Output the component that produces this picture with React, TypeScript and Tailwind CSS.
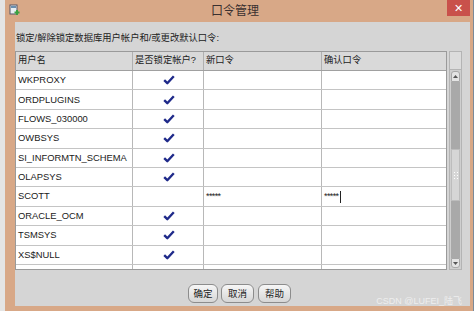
import React from "react";

const rows: { name: string; lock: boolean; pw?: boolean }[] = [
  { name: "WKPROXY", lock: true },
  { name: "ORDPLUGINS", lock: true },
  { name: "FLOWS_030000", lock: true },
  { name: "OWBSYS", lock: true },
  { name: "SI_INFORMTN_SCHEMA", lock: true },
  { name: "OLAPSYS", lock: true },
  { name: "SCOTT", lock: false, pw: true },
  { name: "ORACLE_OCM", lock: true },
  { name: "TSMSYS", lock: true },
  { name: "XS$NULL", lock: true },
  { name: "", lock: false },
];

function Check() {
  return (
    <svg width="12" height="10" viewBox="0 0 12 10">
      <path d="M1.2 5.2 L4.3 8.2 L10.8 1.2" fill="none" stroke="#1f2a8a" strokeWidth="2.4" strokeLinejoin="round" />
    </svg>
  );
}

function AppIcon() {
  return (
    <svg width="12" height="12" viewBox="0 0 12 12">
      <rect x="1" y="1" width="7" height="9" fill="#e8eef2" stroke="#556" strokeWidth="1" />
      <rect x="2" y="2" width="5" height="2" fill="#6a8fb0" />
      <path d="M8 6 V11 M5.5 8.5 H10.5" stroke="#3aa040" strokeWidth="2" />
    </svg>
  );
}

export default function App() {
  const font = { fontFamily: '"Liberation Sans", "Noto Sans CJK SC", sans-serif' };
  return (
    <div className="w-[474px] h-[311px] flex bg-[#e4e4e4] overflow-hidden" style={font}>
      <div className="w-[5px] shrink-0" />
      <div className="flex flex-col w-[468px] bg-[#d8a887]">
        {/* title bar */}
        <div className="h-[22px] flex items-start relative shrink-0">
          <div className="ml-[4px] mt-[4px]">
            <AppIcon />
          </div>
          <div className="flex-1 text-center text-[12px] leading-[22px] text-[#3a3030] pl-[2px]">口令管理</div>
          <div className="w-[23px] h-[16px] bg-[#c9514b] text-white text-[11px] leading-[16px] text-center mr-[3px]">✕</div>
        </div>
        <div className="flex flex-1">
          <div className="w-[10px] shrink-0" />
          <div className="w-[455px] h-[284px] bg-[#d5d5d5] flex flex-col">
            <div className="pt-[10px] pl-[1px] h-[29px] text-[9.3px] leading-[12px] text-[#222]">
              锁定/解除锁定数据库用户帐户和/或更改默认口令:
            </div>
            <div className="flex h-[219px]">
              <div className="w-[432px] h-[219px] border border-[#9a9a9a] overflow-hidden flex flex-col">
                <div className="h-[19px] flex bg-[#d9d9d9] border-b border-[#a0a0a0] text-[9.3px] text-[#222] leading-[17px] shrink-0">
                  <div className="w-[117px] pl-[2px] border-r border-[#b0b0b0]">用户名</div>
                  <div className="w-[71px] pl-[2px] border-r border-[#b0b0b0]">是否锁定帐户?</div>
                  <div className="w-[118px] pl-[2px] border-r border-[#b0b0b0]">新口令</div>
                  <div className="flex-1 pl-[2px]">确认口令</div>
                </div>
                {rows.map((r, i) => (
                  <div key={i} className="h-[19.4px] shrink-0 flex bg-white border-b border-[#c4c4c4] text-[9.4px] text-[#1a1a1a]">
                    <div className="w-[117px] pl-[2px] border-r border-[#b8b8b8] flex items-center">{r.name}</div>
                    <div className="w-[71px] border-r border-[#b8b8b8] flex items-center justify-center pl-[2px]">
                      {r.lock && <Check />}
                    </div>
                    <div className="w-[118px] pl-[2px] border-r border-[#b8b8b8] flex items-center text-[9px] tracking-[-0.6px]">
                      {r.pw ? "*****" : ""}
                    </div>
                    <div className="flex-1 pl-[2px] flex items-center text-[9px] tracking-[-0.6px]">
                      {r.pw ? (
                        <>
                          <span>*****</span>
                          <span className="inline-block w-[1px] h-[12px] bg-[#222] ml-[1px]" />
                        </>
                      ) : null}
                    </div>
                  </div>
                ))}
              </div>
              {/* scrollbar */}
              <div className="ml-[2px] w-[13px] h-[219px] flex flex-col">
                <div className="h-[19px] bg-[#dcdcdc] border border-[#b4b4b4] shrink-0" />
                <div className="flex-1 flex flex-col border border-[#b4b4b4] border-t-0 bg-[#cfcfcf]">
                  <div className="h-[11px] mt-[1px] mx-[1px] bg-[#e4e4e4] border border-[#a8a8a8] rounded-t-[3px] flex items-center justify-center shrink-0">
                    <svg width="5" height="3" viewBox="0 0 5 3"><path d="M0 3 L2.5 0 L5 3Z" fill="#555" /></svg>
                  </div>
                  <div className="h-[67px] mx-[1px] bg-[#a9a9a9] shrink-0" />
                  <div className="h-[52px] mx-[1px] bg-[#d6d6d6] border border-[#bdbdbd] flex flex-col items-center justify-center gap-[2px] shrink-0">
                    <div className="flex gap-[2px]"><span className="w-[1px] h-[1px] bg-white" /><span className="w-[1px] h-[1px] bg-white" /></div>
                    <div className="flex gap-[2px]"><span className="w-[1px] h-[1px] bg-white" /><span className="w-[1px] h-[1px] bg-white" /></div>
                    <div className="flex gap-[2px]"><span className="w-[1px] h-[1px] bg-white" /><span className="w-[1px] h-[1px] bg-white" /></div>
                  </div>
                  <div className="flex-1 mx-[1px] bg-[#a9a9a9]" />
                  <div className="h-[10px] mb-[1px] mx-[1px] bg-[#e4e4e4] border border-[#a8a8a8] rounded-b-[3px] flex items-center justify-center shrink-0">
                    <svg width="5" height="3" viewBox="0 0 5 3"><path d="M0 0 L2.5 3 L5 0Z" fill="#555" /></svg>
                  </div>
                </div>
              </div>
            </div>
            <div className="flex items-end mt-[14px] relative">
              <div className="flex gap-[3px] ml-[173px]">
                <button className="w-[30px] h-[19px] rounded-[6px] border border-[#8c8c8c] bg-gradient-to-b from-[#f6f6f6] to-[#d6d6d6] text-[9.5px] text-[#222] leading-[17px]" style={font}>确定</button>
                <button className="w-[33px] h-[19px] rounded-[6px] border border-[#8c8c8c] bg-gradient-to-b from-[#f6f6f6] to-[#d6d6d6] text-[9.5px] text-[#222] leading-[17px]" style={font}>取消</button>
                <button className="w-[33px] h-[19px] rounded-[6px] border border-[#8c8c8c] bg-gradient-to-b from-[#f6f6f6] to-[#d6d6d6] text-[9.5px] text-[#222] leading-[17px] ml-[1px]" style={font}>帮助</button>
              </div>
              <div className="ml-auto mr-[8px] mb-[-3px] text-[9px] text-[#eeeeee] leading-[10px]">CSDN @LUFEI_陆飞</div>
            </div>
          </div>
          <div className="w-[3px] shrink-0" />
        </div>
      </div>
      <div className="w-[1px] bg-[#7a8a9a]" />
    </div>
  );
}
